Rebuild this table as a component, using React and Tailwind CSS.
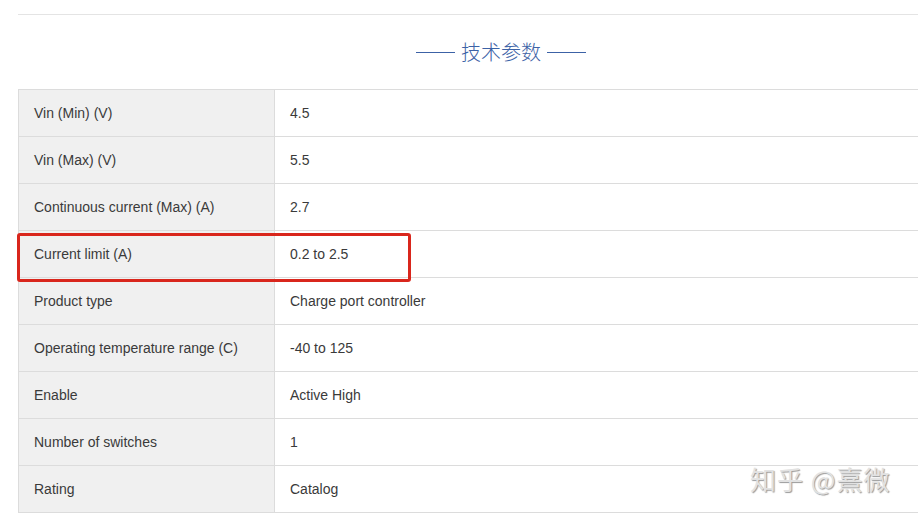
import React from 'react';

const rows = [
  ['Vin (Min) (V)', '4.5'],
  ['Vin (Max) (V)', '5.5'],
  ['Continuous current (Max) (A)', '2.7'],
  ['Current limit (A)', '0.2 to 2.5'],
  ['Product type', 'Charge port controller'],
  ['Operating temperature range (C)', '-40 to 125'],
  ['Enable', 'Active High'],
  ['Number of switches', '1'],
  ['Rating', 'Catalog'],
];

export default function App() {
  return (
    <div
      className="relative w-[918px] h-[518px] overflow-hidden bg-white text-[#3a3a3a]"
      style={{ fontFamily: '"Liberation Sans", Arial, "Noto Sans CJK SC", sans-serif' }}
    >
      <div className="ml-[18px] w-[966px] pt-[14px]">
        <div className="border-t border-[#e4e4e4]" />
        <div className="h-[74px] flex items-center justify-center gap-[6px] text-[#3c62a6]">
          <span className="w-[39px] h-px bg-[#3c62a6]" />
          <span className="text-[20px] leading-none font-light" style={{ fontFamily: '"Noto Sans CJK SC", sans-serif' }}>
            技术参数
          </span>
          <span className="w-[39px] h-px bg-[#3c62a6]" />
        </div>
        <div className="border-t border-l border-[#dcdcdc]">
          {rows.map(([label, value], i) => (
            <div key={label} className="relative flex h-[47px] border-b border-[#dcdcdc] text-[14px]">
              <div className="w-[256px] bg-[#f0f0f0] border-r border-[#dcdcdc] flex items-center pl-[15px]">
                {label}
              </div>
              <div className="flex-1 flex items-center pl-[15px]">{value}</div>
              {i === 3 && (
                <div className="absolute z-10 left-[-2px] top-[2px] w-[394px] h-[49px] border-[3px] border-[#d9261c] rounded-[3px]" />
              )}
            </div>
          ))}
        </div>
      </div>
      <div
        className="absolute left-[750px] top-[466px] text-[26px] leading-none text-[#e2e2e2] tracking-[1px]"
        style={{ fontFamily: '"Noto Sans CJK SC", sans-serif', textShadow: '1px 1px 1px #9a9a9a' }}
      >
        知乎 @熹微
      </div>
    </div>
  );
}
